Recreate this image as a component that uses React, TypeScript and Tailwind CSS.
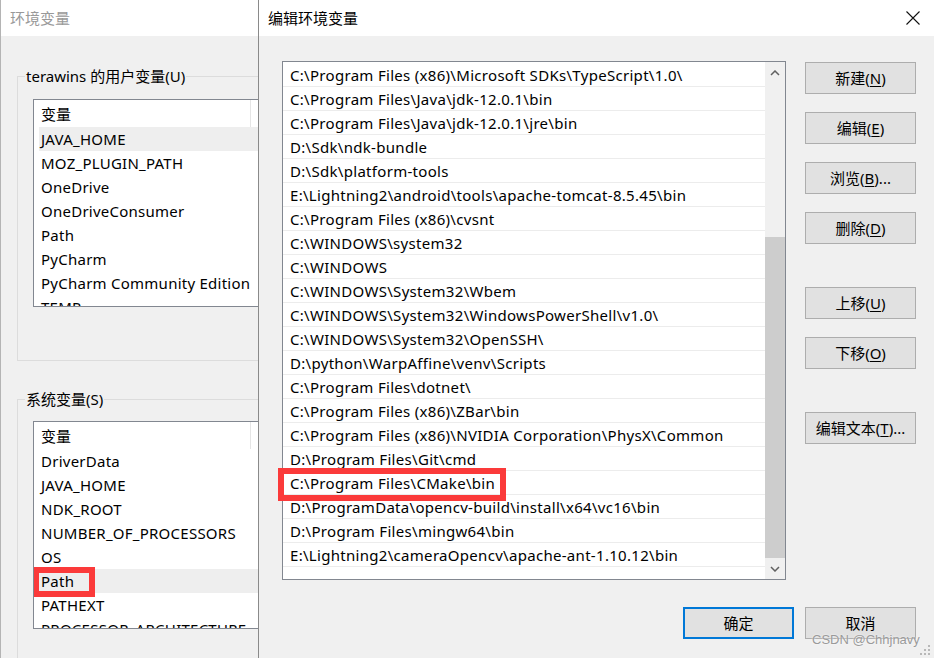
import React from "react";

const userVars = [
  "JAVA_HOME",
  "MOZ_PLUGIN_PATH",
  "OneDrive",
  "OneDriveConsumer",
  "Path",
  "PyCharm",
  "PyCharm Community Edition",
  "TEMP",
];

const sysVars = [
  "DriverData",
  "JAVA_HOME",
  "NDK_ROOT",
  "NUMBER_OF_PROCESSORS",
  "OS",
  "Path",
  "PATHEXT",
  "PROCESSOR_ARCHITECTURE",
];

const paths = [
  "C:\\Program Files (x86)\\Microsoft SDKs\\TypeScript\\1.0\\",
  "C:\\Program Files\\Java\\jdk-12.0.1\\bin",
  "C:\\Program Files\\Java\\jdk-12.0.1\\jre\\bin",
  "D:\\Sdk\\ndk-bundle",
  "D:\\Sdk\\platform-tools",
  "E:\\Lightning2\\android\\tools\\apache-tomcat-8.5.45\\bin",
  "C:\\Program Files (x86)\\cvsnt",
  "C:\\WINDOWS\\system32",
  "C:\\WINDOWS",
  "C:\\WINDOWS\\System32\\Wbem",
  "C:\\WINDOWS\\System32\\WindowsPowerShell\\v1.0\\",
  "C:\\WINDOWS\\System32\\OpenSSH\\",
  "D:\\python\\WarpAffine\\venv\\Scripts",
  "C:\\Program Files\\dotnet\\",
  "C:\\Program Files (x86)\\ZBar\\bin",
  "C:\\Program Files (x86)\\NVIDIA Corporation\\PhysX\\Common",
  "D:\\Program Files\\Git\\cmd",
  "C:\\Program Files\\CMake\\bin",
  "D:\\ProgramData\\opencv-build\\install\\x64\\vc16\\bin",
  "D:\\Program Files\\mingw64\\bin",
  "E:\\Lightning2\\cameraOpencv\\apache-ant-1.10.12\\bin",
];

function VarList({
  items,
  selected,
  boxed,
}: {
  items: string[];
  selected: number;
  boxed?: boolean;
}) {
  return (
    <div className="w-[560px] h-[208px] border border-[#828790] bg-white overflow-hidden">
      <div className="h-[27px] flex">
        <div className="w-[217px] h-full border-r border-[#e5e5e5] flex items-center pl-[7px] text-black">
          变量
        </div>
      </div>
      {items.map((v, i) => (
        <div
          key={i}
          className={`relative h-[24px] ml-[5px] pl-[2px] flex items-center whitespace-nowrap text-black tracking-[0.25px] ${
            i === selected ? "bg-[#eeeeee]" : ""
          }`}
        >
          {v}
          {boxed && i === selected && (
            <div className="absolute left-[-6px] top-[-2px] w-[62px] h-[30px] border-[6px] border-[#fb3a3a]" />
          )}
        </div>
      ))}
    </div>
  );
}

function Btn({
  children,
  primary,
}: {
  children: React.ReactNode;
  primary?: boolean;
}) {
  return (
    <div
      className={`w-[111px] h-[32px] flex items-center justify-center bg-[#e1e1e1] text-black ${
        primary ? "border-2 border-[#0078d7]" : "border border-[#adadad]"
      }`}
    >
      {children}
    </div>
  );
}

function U({ c }: { c: string }) {
  return <span className="underline underline-offset-[2px]">{c}</span>;
}

function Chevron({ up }: { up?: boolean }) {
  return (
    <svg width="10" height="6" viewBox="0 0 10 6">
      <path
        d={up ? "M1 5 L5 1 L9 5" : "M1 1 L5 5 L9 1"}
        fill="none"
        stroke="#606060"
        strokeWidth="1.5"
      />
    </svg>
  );
}

export default function App() {
  return (
    <div className="relative w-[934px] h-[658px] overflow-hidden flex bg-[#f0f0f0] text-[15px] leading-[20px] font-['Noto_Sans','Noto_Sans_CJK_SC',sans-serif]">
      {/* Background window: 环境变量 */}
      <div className="w-[258px] h-full shrink-0 flex flex-col border-l border-[#b4b4b4] overflow-hidden">
        <div className="h-[36px] shrink-0 bg-white flex items-center pl-[9px] text-[#999999]">
          环境变量
        </div>
        <div className="flex-1 bg-[#f0f0f0] pl-[16px] pt-[40px]">
          <div className="relative w-[600px] h-[285px] border border-[#dcdcdc] pl-[15px] pt-[22px]">
            <span className="absolute left-[7px] top-[-11px] bg-[#f0f0f0] px-[1px] text-black whitespace-nowrap">
              terawins 的用户变量(U)
            </span>
            <VarList items={userVars} selected={0} />
          </div>
          <div className="relative mt-[38px] w-[600px] h-[400px] border border-[#dcdcdc] pl-[15px] pt-[21px]">
            <span className="absolute left-[7px] top-[-11px] bg-[#f0f0f0] px-[1px] text-black whitespace-nowrap">
              系统变量(S)
            </span>
            <VarList items={sysVars} selected={5} boxed />
          </div>
        </div>
      </div>

      {/* Foreground dialog: 编辑环境变量 */}
      <div className="flex-1 h-full flex flex-col border-l border-[#8a8a8a]">
        <div className="h-[36px] shrink-0 bg-white flex items-center justify-between pl-[9px] pr-[14px] text-black">
          <span>编辑环境变量</span>
          <svg width="14" height="14" viewBox="0 0 14 14">
            <path d="M0.5 0.5 L13.5 13.5 M13.5 0.5 L0.5 13.5" stroke="#111" strokeWidth="1.1" />
          </svg>
        </div>
        <div className="flex-1 bg-[#f0f0f0] pt-[25px] pl-[23px] pr-[18px] flex flex-col">
          <div className="flex gap-[19px]">
            <div className="w-[504px] h-[519px] border border-[#828790] bg-white flex">
              <div className="flex-1 pt-[1px]">
                {paths.map((p, i) => (
                  <div
                    key={i}
                    className="relative h-[24px] border-b border-[#ececec] pl-[7px] flex items-center whitespace-nowrap text-black tracking-[0.3px]"
                  >
                    {p}
                    {i === 17 && (
                      <div className="absolute left-[-5px] top-[-3px] w-[228px] h-[33px] border-[6px] border-[#fb3a3a]" />
                    )}
                  </div>
                ))}
              </div>
              <div className="w-[20px] bg-[#f0f0f0] flex flex-col">
                <div className="h-[21px] flex items-center justify-center">
                  <Chevron up />
                </div>
                <div className="h-[154px]" />
                <div className="h-[321px] bg-[#cdcdcd]" />
                <div className="flex-1 flex items-center justify-center">
                  <Chevron />
                </div>
              </div>
            </div>
            <div className="flex flex-col pt-[1px]">
              <Btn>
                新建(<U c="N" />)
              </Btn>
              <div className="h-[18px]" />
              <Btn>
                编辑(<U c="E" />)
              </Btn>
              <div className="h-[18px]" />
              <Btn>
                浏览(<U c="B" />)...
              </Btn>
              <div className="h-[18px]" />
              <Btn>
                删除(<U c="D" />)
              </Btn>
              <div className="h-[43px]" />
              <Btn>
                上移(<U c="U" />)
              </Btn>
              <div className="h-[18px]" />
              <Btn>
                下移(<U c="O" />)
              </Btn>
              <div className="h-[43px]" />
              <Btn>
                编辑文本(<U c="T" />)...
              </Btn>
            </div>
          </div>
          <div className="flex justify-end gap-[11px] mt-[27px]">
            <Btn primary>确定</Btn>
            <Btn>取消</Btn>
          </div>
        </div>
      </div>

      {/* watermark */}
      <div className="absolute left-[812px] top-[631px] text-[13px] leading-[18px] text-[#9a9a9a] font-['Liberation_Sans',sans-serif] [text-shadow:0_0_2px_#ffffff]">
        CSDN @Chhjnavy
      </div>
      {/* resize grip */}
      <svg className="absolute right-[3px] bottom-[2px]" width="12" height="12" viewBox="0 0 12 12">
        {[
          [9, 1],
          [9, 5],
          [5, 5],
          [9, 9],
          [5, 9],
          [1, 9],
        ].map(([x, y], i) => (
          <rect key={i} x={x} y={y} width="2" height="2" fill="#b8b8b8" />
        ))}
      </svg>
    </div>
  );
}
